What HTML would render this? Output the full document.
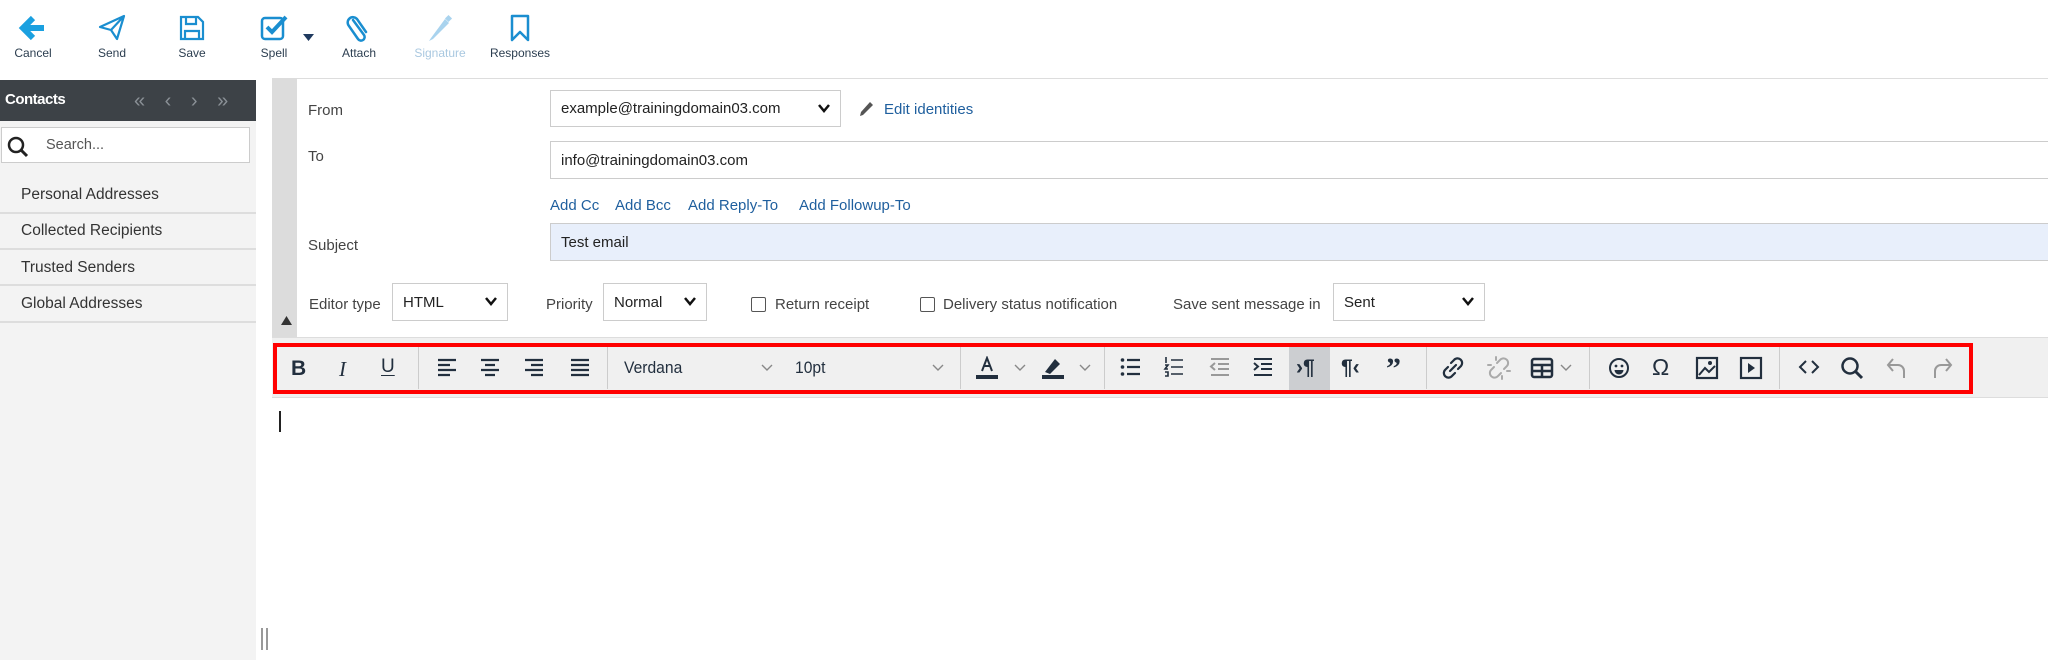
<!DOCTYPE html>
<html><head><meta charset="utf-8"><style>
*{margin:0;padding:0;box-sizing:border-box}
body{width:2048px;height:660px;overflow:hidden;background:#fff;font-family:"Liberation Sans",sans-serif;color:#333;position:relative}
.a{position:absolute}
.tb{position:absolute;top:14px;width:80px;text-align:center;font-size:12px;color:#2c3e50}
.tb svg{display:block;margin:0 auto 4px}
.lbl{position:absolute;font-size:15px;color:#444}
.inp{position:absolute;border:1px solid #ccc;background:#fff;font-size:15px;padding-left:10px;display:flex;align-items:center;color:#222}
.chev{position:absolute;right:10px;top:50%;margin-top:-5px}
.link{position:absolute;font-size:15px;color:#1f5f9e}
.row{position:absolute;left:0;width:256px;border-bottom:2px solid #ddd;font-size:15.5px;color:#333;padding-left:21px}
.ic{position:absolute;top:356px}
.sep{position:absolute;top:347px;width:1px;height:42px;background:#ccc}
.cb{position:absolute;width:15px;height:15px;border:1.5px solid #555;border-radius:2px;top:297px}
</style></head><body>

<div class="tb" style="left:-7px"><svg width="30" height="28" viewBox="0 0 30 28"><path d="M15 4 L5 14 L15 24 M5 14 H26" stroke="#1aa0e0" stroke-width="6" fill="none" stroke-linejoin="miter"/></svg>Cancel</div>
<div class="tb" style="left:72px"><svg width="30" height="28" viewBox="0 0 30 28"><path d="M3 13 L27 2 L20 25 L14 16 Z M14 16 L27 2" stroke="#1a8ed0" stroke-width="2.2" fill="none" stroke-linejoin="round"/></svg>Send</div>
<div class="tb" style="left:152px"><svg width="30" height="28" viewBox="0 0 30 28"><path d="M4 3 H21 L26 8 V25 H4 Z M9 3 V10 H19 V3 M8 25 V17 H22 V25" stroke="#1a8ed0" stroke-width="2.2" fill="none"/></svg>Save</div>
<div class="tb" style="left:234px"><svg width="30" height="28" viewBox="0 0 30 28"><rect x="3" y="4" width="21" height="21" rx="3" stroke="#1a8ed0" stroke-width="2.5" fill="none"/><path d="M8 13 L13 18 L27 3" stroke="#1a8ed0" stroke-width="4" fill="none"/></svg>Spell</div>
<svg class="a" style="left:303px;top:34px" width="11" height="7"><path d="M0 0 H11 L5.5 7 Z" fill="#1f3a5f"/></svg>
<div class="tb" style="left:319px"><svg width="30" height="28" viewBox="0 0 30 28"><path d="M9 6 L20 21 A3.5 3.5 0 0 1 14 25 L5 12 A5 5 0 0 1 13 5 L22 18" stroke="#1a8ed0" stroke-width="2.5" fill="none" stroke-linecap="round"/></svg>Attach</div>
<div class="tb" style="left:400px;color:#a9c8e0"><svg width="30" height="28" viewBox="0 0 30 28"><path d="M6 24 L4 27 L8 25 L24 9 L20 5 Z" fill="#a9d3ee"/><rect x="21" y="2" width="5" height="5" transform="rotate(45 23.5 4.5)" fill="#a9d3ee"/></svg>Signature</div>
<div class="tb" style="left:480px"><svg width="30" height="28" viewBox="0 0 30 28"><path d="M7 2 H23 V26 L15 18 L7 26 Z" stroke="#1a8ed0" stroke-width="2.5" fill="none" stroke-linejoin="round"/></svg>Responses</div>

<div class="a" style="left:0;top:80px;width:256px;height:580px;background:#f3f3f3"></div>
<div class="a" style="left:0;top:80px;width:256px;height:41px;background:#3d4247;color:#fff;font-weight:bold;font-size:15px;padding:11px 0 0 5px;letter-spacing:-0.5px">Contacts</div>
<div class="a" style="left:134px;top:90px;font-size:20px;color:#8a9096;word-spacing:14px">« ‹ › »</div>
<div class="a" style="left:1px;top:127px;width:249px;height:36px;background:#fff;border:1px solid #ccc"></div>
<svg class="a" style="left:7px;top:136px" width="22" height="22"><circle cx="9" cy="9" r="7" stroke="#222" stroke-width="2.5" fill="none"/><path d="M14 14 L20 20" stroke="#222" stroke-width="3"/></svg>
<div class="a" style="left:46px;top:137px;font-size:14.5px;color:#555">Search...</div>
<div class="row" style="top:177px;height:37px;padding-top:9px">Personal Addresses</div>
<div class="row" style="top:214px;height:36px;padding-top:8px">Collected Recipients</div>
<div class="row" style="top:250px;height:36px;padding-top:9px">Trusted Senders</div>
<div class="row" style="top:286px;height:37px;padding-top:9px">Global Addresses</div>
<div class="a" style="left:261px;top:628px;width:2px;height:22px;background:#999"></div>
<div class="a" style="left:266px;top:628px;width:2px;height:22px;background:#999"></div>

<div class="a" style="left:272px;top:78px;width:1776px;height:1px;background:#ddd"></div>
<div class="a" style="left:272px;top:78px;width:25px;height:259px;background:#dcdcdc"></div>
<svg class="a" style="left:281px;top:316px" width="11" height="9"><path d="M0 9 L5.5 0 L11 9Z" fill="#333"/></svg>
<div class="lbl" style="left:308px;top:102px">From</div>
<div class="lbl" style="left:308px;top:148px">To</div>
<div class="lbl" style="left:308px;top:237px">Subject</div>
<div class="lbl" style="left:309px;top:296px">Editor type</div>

<div class="inp" style="left:550px;top:90px;width:291px;height:37px">example@trainingdomain03.com<svg class="chev" width="12" height="9"><path d="M1 1 L6 7 L11 1" stroke="#111" stroke-width="2.5" fill="none"/></svg></div>
<svg class="a" style="left:858px;top:100px" width="16" height="18"><path d="M2 16 L3 12 L12 2 L15 5 L5 15 Z" fill="#555"/></svg>
<div class="link" style="left:884px;top:101px">Edit identities</div>
<div class="inp" style="left:550px;top:141px;width:1500px;height:38px">info@trainingdomain03.com</div>
<div class="link" style="left:550px;top:197px">Add Cc</div>
<div class="link" style="left:615px;top:197px">Add Bcc</div>
<div class="link" style="left:688px;top:197px">Add Reply-To</div>
<div class="link" style="left:799px;top:197px">Add Followup-To</div>
<div class="inp" style="left:550px;top:223px;width:1500px;height:38px;background:#e8effb">Test email</div>

<div class="inp" style="left:392px;top:283px;width:116px;height:38px">HTML<svg class="chev" width="12" height="9"><path d="M1 1 L6 7 L11 1" stroke="#111" stroke-width="2.5" fill="none"/></svg></div>
<div class="lbl" style="left:546px;top:296px">Priority</div>
<div class="inp" style="left:603px;top:283px;width:104px;height:38px">Normal<svg class="chev" width="12" height="9"><path d="M1 1 L6 7 L11 1" stroke="#111" stroke-width="2.5" fill="none"/></svg></div>
<div class="cb" style="left:751px"></div>
<div class="lbl" style="left:775px;top:296px">Return receipt</div>
<div class="cb" style="left:920px"></div>
<div class="lbl" style="left:943px;top:296px">Delivery status notification</div>
<div class="lbl" style="left:1173px;top:296px">Save sent message in</div>
<div class="inp" style="left:1333px;top:283px;width:152px;height:38px">Sent<svg class="chev" width="12" height="9"><path d="M1 1 L6 7 L11 1" stroke="#111" stroke-width="2.5" fill="none"/></svg></div>

<div class="a" style="left:272px;top:337px;width:1776px;height:1px;background:#ddd"></div>
<div class="a" style="left:272px;top:338px;width:1776px;height:60px;background:#f0f0f0;border-bottom:1px solid #ddd"></div>
<div class="a" style="left:1289px;top:347px;width:41px;height:43px;background:#ccced1"></div>
<div class="sep" style="left:418px"></div><div class="sep" style="left:607px"></div><div class="sep" style="left:960px"></div><div class="sep" style="left:1104px"></div><div class="sep" style="left:1426px"></div><div class="sep" style="left:1589px"></div><div class="sep" style="left:1779px"></div>
<div class="a" style="left:291px;top:357px;font-size:21px;font-weight:bold;color:#222f3e">B</div>
<div class="a" style="left:339px;top:357px;font-size:21px;font-style:italic;font-family:'Liberation Serif',serif;color:#222f3e">I</div>
<div class="a" style="left:381px;top:356px;font-size:19px;color:#222f3e;text-decoration:underline;text-underline-offset:3px">U</div>
<svg class="ic" style="left:436px" width="22" height="22"><path d="M2 4H20M2 9H14M2 14H20M2 19H14" stroke="#222f3e" stroke-width="2.2"/></svg>
<svg class="ic" style="left:479px" width="22" height="22"><path d="M2 4H20M6 9H16M2 14H20M6 19H16" stroke="#222f3e" stroke-width="2.2"/></svg>
<svg class="ic" style="left:523px" width="22" height="22"><path d="M2 4H20M8 9H20M2 14H20M8 19H20" stroke="#222f3e" stroke-width="2.2"/></svg>
<svg class="ic" style="left:569px" width="22" height="22"><path d="M2 4H20M2 9H20M2 14H20M2 19H20" stroke="#222f3e" stroke-width="2.2"/></svg>
<div class="a" style="left:624px;top:358px;font-size:17px;color:#222f3e;transform:scaleX(0.92);transform-origin:left">Verdana</div>
<svg class="a" style="left:761px;top:364px" width="12" height="8"><path d="M1 1L6 6L11 1" stroke="#888" stroke-width="1.4" fill="none"/></svg>
<div class="a" style="left:795px;top:358px;font-size:17px;color:#222f3e;transform:scaleX(0.92);transform-origin:left">10pt</div>
<svg class="a" style="left:932px;top:364px" width="12" height="8"><path d="M1 1L6 6L11 1" stroke="#888" stroke-width="1.4" fill="none"/></svg>
<svg class="ic" style="left:975px" width="24" height="24"><path d="M7 15L12 2L17 15M9 10H15" stroke="#222f3e" stroke-width="2" fill="none"/><rect x="1" y="19" width="22" height="4" fill="#222f3e"/></svg>
<svg class="a" style="left:1014px;top:364px" width="12" height="8"><path d="M1 1L6 6L11 1" stroke="#888" stroke-width="1.4" fill="none"/></svg>
<svg class="ic" style="left:1041px" width="24" height="24"><path d="M4 16L14 3L19 8L9 18Z" fill="#222f3e"/><rect x="1" y="19" width="22" height="4" fill="#222f3e"/></svg>
<svg class="a" style="left:1079px;top:364px" width="12" height="8"><path d="M1 1L6 6L11 1" stroke="#888" stroke-width="1.4" fill="none"/></svg>
<svg class="ic" style="left:1120px" width="22" height="22"><path d="M7 4H20M7 11H20M7 18H20" stroke="#222f3e" stroke-width="2.2"/><circle cx="2.5" cy="4" r="1.8" fill="#222f3e"/><circle cx="2.5" cy="11" r="1.8" fill="#222f3e"/><circle cx="2.5" cy="18" r="1.8" fill="#222f3e"/></svg>
<svg class="ic" style="left:1163px" width="22" height="22"><path d="M8 4H20M8 11H20M8 18H20M3 1V7M2 9H5L2 13H5M2 16H5V20H2" stroke="#222f3e" stroke-width="1.6" fill="none"/></svg>
<svg class="ic" style="left:1209px" width="22" height="22"><path d="M2 3H20M9 8H20M9 13H20M2 19H20M6 7L2 10.5L6 14" stroke="#999" stroke-width="2" fill="none"/></svg>
<svg class="ic" style="left:1252px" width="22" height="22"><path d="M2 3H20M9 8H20M9 13H20M2 19H20M2 7L6 10.5L2 14" stroke="#222f3e" stroke-width="2" fill="none"/></svg>
<div class="a" style="left:1296px;top:356px;font-size:21px;font-weight:bold;color:#222f3e">›¶</div>
<div class="a" style="left:1341px;top:356px;font-size:21px;font-weight:bold;color:#222f3e">¶‹</div>
<div class="a" style="left:1386px;top:352px;font-size:30px;font-weight:bold;color:#222f3e;font-family:'Liberation Serif',serif">”</div>
<svg class="ic" style="left:1441px" width="24" height="24"><path d="M10 7L13 4A4 4 0 0 1 20 10L17 13M14 17L11 20A4 4 0 0 1 4 14L7 11M9 15L15 9" stroke="#222f3e" stroke-width="2.2" fill="none" stroke-linecap="round"/></svg>
<svg class="ic" style="left:1487px" width="24" height="24"><path d="M10 7L13 4A4 4 0 0 1 20 10L17 13M14 17L11 20A4 4 0 0 1 4 14L7 11M9 1V4M15 20V23M1 9H4M20 15H23" stroke="#aaa" stroke-width="2" fill="none" stroke-linecap="round"/></svg>
<svg class="ic" style="left:1530px" width="24" height="24"><rect x="2" y="3" width="20" height="18" rx="2" stroke="#222f3e" stroke-width="2.5" fill="none"/><path d="M2 9H22M12 9V21M2 15H22" stroke="#222f3e" stroke-width="2.5"/></svg>
<svg class="a" style="left:1560px;top:364px" width="12" height="8"><path d="M1 1L6 6L11 1" stroke="#888" stroke-width="1.4" fill="none"/></svg>
<svg class="ic" style="left:1607px" width="24" height="24"><circle cx="12" cy="12" r="9" stroke="#222f3e" stroke-width="2" fill="none"/><circle cx="9" cy="10" r="1.4" fill="#222f3e"/><circle cx="15" cy="10" r="1.4" fill="#222f3e"/><path d="M7.5 14H16.5A4.5 4.5 0 0 1 7.5 14Z" fill="#222f3e"/></svg>
<div class="a" style="left:1652px;top:354px;font-size:23px;color:#222f3e">Ω</div>
<svg class="ic" style="left:1695px" width="24" height="24"><rect x="2" y="2" width="20" height="20" stroke="#222f3e" stroke-width="2.2" fill="none"/><path d="M4 19L10 12L14 16L20 10" stroke="#222f3e" stroke-width="2" fill="none"/><circle cx="15" cy="7" r="2" fill="#222f3e"/></svg>
<svg class="ic" style="left:1739px" width="24" height="24"><rect x="2" y="2" width="20" height="20" stroke="#222f3e" stroke-width="2.2" fill="none"/><path d="M9 7L16 12L9 17Z" fill="#222f3e"/></svg>
<svg class="ic" style="left:1798px" width="22" height="22"><path d="M8 5L2 11L8 17M14 5L20 11L14 17" stroke="#222f3e" stroke-width="2" fill="none"/></svg>
<svg class="ic" style="left:1840px" width="24" height="24"><circle cx="10" cy="10" r="7.5" stroke="#222f3e" stroke-width="2.5" fill="none"/><path d="M15.5 15.5L22 22" stroke="#222f3e" stroke-width="3"/></svg>
<svg class="ic" style="left:1885px" width="24" height="24"><path d="M8 3L3 9L8 15M3 9H13A6 6 0 0 1 19 15V22" stroke="#999" stroke-width="2" fill="none"/></svg>
<svg class="ic" style="left:1930px" width="24" height="24"><path d="M16 3L21 9L16 15M21 9H11A6 6 0 0 0 5 15V22" stroke="#999" stroke-width="2" fill="none"/></svg>
<div class="a" style="left:273px;top:343px;width:1700px;height:51px;border:4px solid #f00"></div>
<div class="a" style="left:279px;top:411px;width:2px;height:21px;background:#222"></div>
</body></html>
